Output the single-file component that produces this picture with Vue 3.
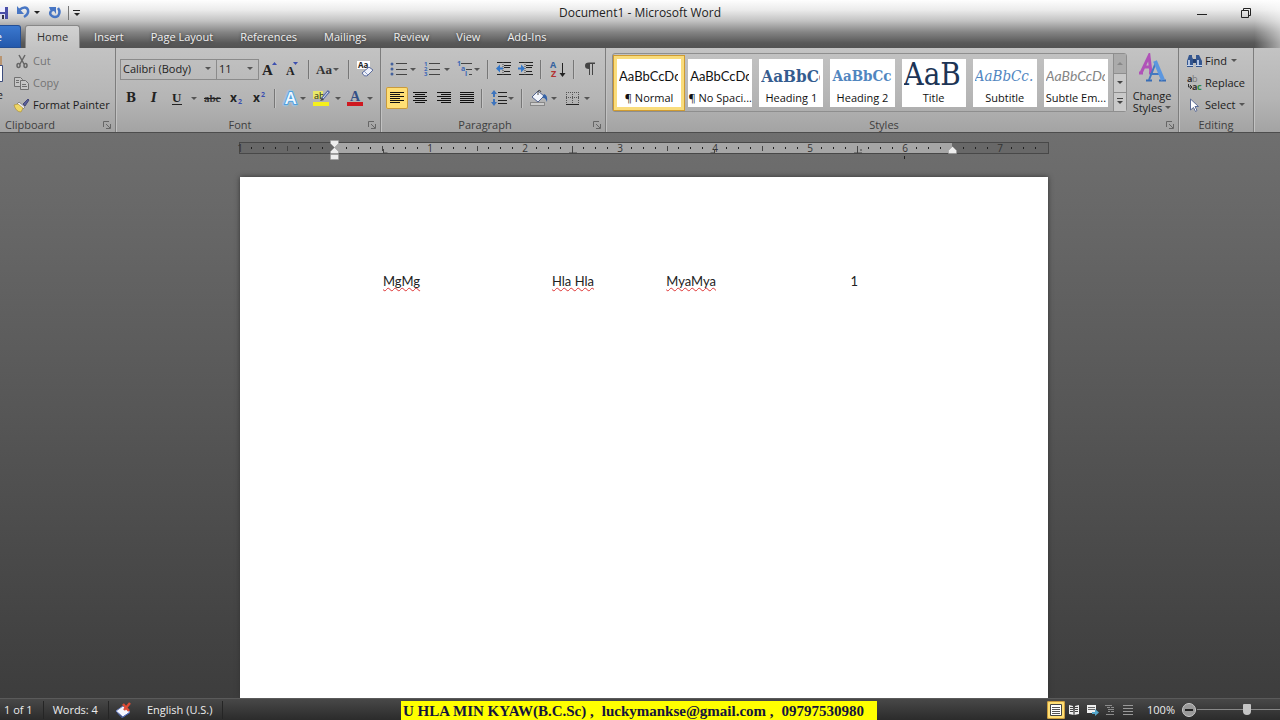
<script setup>
import { ref } from 'vue'

const tabs = ['Home', 'Insert', 'Page Layout', 'References', 'Mailings', 'Review', 'View', 'Add-Ins']
const family = ref('Calibri (Body)')
const size = ref('11')
const zoom = ref(61)

// Icon markup is drawn around a centred origin, 22px high.
const arrow = (x, y = 0) => `<path d="M${x - 3} ${y - 1}h6l-3 3z" fill="#555"/>`
const lines = (x, ys, w, c = '#222') => ys.map((y) => `<path d="M${x} ${y}.5h${w}" stroke="${c}"/>`).join('')
const serif = 'font-family="DejaVu Serif, serif"'
const sans = 'font-family="Open Sans, sans-serif"'
const sep = { w: 8, sep: true }

const fontTop = [
  { name: 'Grow Font', w: 22, svg: `<text x="-8" y="6" font-size="15" font-weight="700" font-family="Liberation Serif, serif" fill="#222">A</text><path d="M2 -4h5l-2.500 -3z" fill="#3c4fb0"/>` },
  { name: 'Shrink Font', w: 22, svg: `<text x="-6" y="6" font-size="12" font-weight="700" font-family="Liberation Serif, serif" fill="#222">A</text><path d="M1 -7h5l-2.500 3z" fill="#3c4fb0"/>` },
  { ...sep, w: 10 },
  { name: 'Change Case', w: 30, svg: `<text x="-12" y="5" font-size="13" font-weight="700" font-family="Liberation Serif, serif" fill="#333">Aa</text>${arrow(8)}` },
  { ...sep, w: 10 },
  { name: 'Clear Formatting', w: 24, svg: `<rect x="-8" y="-8" width="13" height="8" fill="#fff"/><text x="-7" y="-1" font-size="8" font-weight="700" ${sans} fill="#222">Aa</text><path d="M-3 4l7-6 4 3-6 6q-3 1-5-3z" fill="#eef1fa" stroke="#5d6d9c"/><path d="M-1 2l4 4" stroke="#8c9cc8"/>` }
]
const fontBottom = [
  { name: 'Bold', w: 22, svg: `<text x="-5" y="4" font-size="12" font-weight="700" ${serif} fill="#222">B</text>` },
  { name: 'Italic', w: 24, svg: `<text x="-3" y="4" font-size="12" font-style="italic" font-weight="700" ${serif} fill="#222">I</text>` },
  { name: 'Underline', w: 34, svg: `<text x="-11" y="4" font-size="13" font-weight="700" font-family="Liberation Serif, serif" fill="#222">U</text><path d="M-11 6.500h10" stroke="#222"/>${arrow(11)}` },
  { name: 'Strikethrough', w: 24, svg: `<text x="-8" y="4" font-size="11" font-weight="700" font-family="Liberation Serif, serif" fill="#333">abc</text><path d="M-8 .5h17" stroke="#222"/>` },
  { name: 'Subscript', w: 24, svg: `<text x="-6" y="4" font-size="12" font-weight="700" ${sans} fill="#222">x</text><text x="2" y="6" font-size="7" font-weight="700" ${sans} fill="#3c4fb0">2</text>` },
  { name: 'Superscript', w: 22, svg: `<text x="-6" y="4" font-size="12" font-weight="700" ${sans} fill="#222">x</text><text x="2" y="-1" font-size="7" font-weight="700" ${sans} fill="#3c4fb0">2</text>` },
  sep,
  { name: 'Text Effects', w: 30, svg: `<text x="-8" y="6" font-size="17" ${sans} fill="none" stroke="#8fcbf7" stroke-width="5" stroke-opacity=".5" stroke-linejoin="round">A</text><text x="-8" y="6" font-size="17" ${sans} fill="#eef8ff" stroke="#4d9fe0" stroke-width="2" paint-order="stroke" font-weight="600">A</text>${arrow(10)}` },
  { name: 'Text Highlight Color', w: 36, svg: `<rect x="-13" y="-7" width="10" height="8" fill="#e8e86a"/><text x="-12" y="1" font-size="9" ${sans} fill="#222">ab</text><path d="M3 -7l-7 8" stroke="#5b6fa8" stroke-width="3"/><path d="M2 -6l-5 6" stroke="#dfe6f7"/><path d="M-4 0l-2 3 4-1z" fill="#444"/><rect x="-13" y="4" width="16" height="4" fill="#f5f01c"/>${arrow(12)}` },
  { name: 'Font Color', w: 32, svg: `<text x="-10" y="3" font-size="14" font-weight="700" font-family="Liberation Serif, serif" fill="#344f86">A</text><rect x="-13" y="4" width="16" height="4" fill="#cf1820"/>${arrow(10)}` }
]
const dots = [-5, 0, 5].map((y) => `<circle cx="-11" cy="${y}" r="1.500" fill="#44619c"/>`).join('')
const nums = [-3, 2, 7].map((y, i) => `<text x="-13" y="${y}" font-size="6" font-weight="700" ${sans} fill="#3d69b8">${i + 1}</text>`).join('')
const indent = (d) => `${lines(-7, [-6, 5], 14)}${lines(0, [-3], 7)}${lines(0, [-1, 2], 6)}<path d="M-1 -7v14" stroke="#444" stroke-dasharray="1 1"/><path d="${d}" fill="#3477c9"/>`
const paraTop = [
  { name: 'Bullets', w: 34, svg: `${dots}${lines(-7, [-5, 0, 5], 11, '#444')}${arrow(10)}` },
  { name: 'Numbering', w: 34, svg: `${nums}${lines(-8, [-5, 0, 5], 11, '#444')}${arrow(10)}` },
  { name: 'Multilevel List', w: 30, svg: `<g font-size="7" font-weight="700" ${sans} fill="#3d69b8"><text x="-12" y="-3">1</text><text x="-8" y="2">a</text><text x="-4" y="7">i</text></g>${lines(-8, [-5], 11, '#444')}${lines(-3, [0], 6, '#444')}${lines(0, [5], 3, '#444')}${arrow(8)}` },
  sep,
  { name: 'Decrease Indent', w: 24, svg: indent('M-8 -.5l4-4v3h3v2h-3v3z') },
  { name: 'Increase Indent', w: 20, svg: indent('M-1 -.5l-4-4v3h-3v2h3v3z') },
  { ...sep, w: 10 },
  { name: 'Sort', w: 24, svg: `<text x="-8" y="-1" font-size="9" font-weight="700" ${sans} fill="#35639f">A</text><text x="-7" y="8" font-size="9" font-weight="700" ${sans} fill="#b23232">Z</text><path d="M4.500 -6v12" stroke="#222"/><path d="M1.500 4h6l-3 4z" fill="#222"/>` },
  sep,
  { name: 'Show Paragraph Marks', w: 24, svg: `<path d="M5-6.500h-6q-4 0-4 3.200t4 3.300v6h1v-11h2v11h1v-11h2z" fill="#444"/>` }
]
const align = (rows) => rows.map(([x, w], i) => `<path d="M${x} ${-5.500 + i * 2}h${w}" stroke="#111"/>`).join('')
const paraBottom = [
  { name: 'Align Left', w: 22, on: true, svg: align([[-7, 14], [-7, 10], [-7, 14], [-7, 10], [-7, 14], [-7, 10]]) },
  { name: 'Center', w: 24, svg: align([[-7, 14], [-5, 10], [-7, 14], [-5, 10], [-7, 14], [-5, 10]]) },
  { name: 'Align Right', w: 24, svg: align([[-7, 14], [-3, 10], [-7, 14], [-3, 10], [-7, 14], [-3, 10]]) },
  { name: 'Justify', w: 22, svg: align([[-7, 14], [-7, 14], [-7, 14], [-7, 14], [-7, 14], [-7, 14]]) },
  sep,
  { name: 'Line Spacing', w: 32, svg: `<path d="M-8 -8l3 4h-2v3h-2v-3h-2zM-8 8l3-4h-2v-3h-2v3h-2z" fill="#3d74bd"/>${lines(-4, [-5, -1, 2, 5], 9, '#222')}${arrow(9)}` },
  sep,
  { name: 'Shading', w: 36, svg: `<path d="M-12 -1l6-6 6 5-6 6z" fill="#f2f5fc" stroke="#51628f"/><path d="M-6 -3v-4q2-2 3 1" fill="none" stroke="#444"/><path d="M0 -4q4 1 3 8-2-5-5-4z" fill="#3563a8"/><rect x="-13.500" y="4.500" width="14" height="3" fill="#ccc" stroke="#888"/>${arrow(10)}` },
  { name: 'Borders', w: 32, svg: `<path d="M-11.500 -6v11M-5.500 -6v11M.5 -6v11M-12 -5.500h13M-12 -.5h13" stroke="#555" stroke-dasharray="1 1" fill="none"/><path d="M-12 6.500h13" stroke="#222"/>${arrow(9)}` }
]
const fontRows = [fontTop, fontBottom]
const paraRows = [paraTop, paraBottom]

const styles = [
  { name: '¶ Normal', text: 'AaBbCcDc', kind: 'body', on: true },
  { name: '¶ No Spaci...', text: 'AaBbCcDc', kind: 'body' },
  { name: 'Heading 1', text: 'AaBbCc', kind: 'h1' },
  { name: 'Heading 2', text: 'AaBbCc', kind: 'h2' },
  { name: 'Title', text: 'AaB', kind: 'title' },
  { name: 'Subtitle', text: 'AaBbCc.', kind: 'subtitle' },
  { name: 'Subtle Em...', text: 'AaBbCcDc', kind: 'subtle' }
]

// Ruler: 95 units per inch, ticks every eighth, zero at the left margin.
const zero = 95
const inch = 95
const ticks = []
for (let i = -8; i <= 59; i++) {
  const x = Math.round(zero + (i * inch) / 8)
  if (i % 8 === 0) {
    if (i !== 0) ticks.push({ x, label: String(Math.abs(i / 8)) })
  } else ticks.push({ x, half: i % 4 === 0 })
}
</script>

<template>
  <div class="app">
    <header class="top">
      <div class="titlebar">
        <div class="quick">
          <button aria-label="Save" class="save"><svg width="8" height="16" viewBox="7 0 8 16"><path d="M0 2h15v12H0z" fill="#4a4fa8" /><path d="M4 2h8v5H4z" fill="#eef" /><path d="M5 9h7v5H5z" fill="#dde" /><path d="M9 10h2v4H9z" fill="#334" /></svg></button>
          <button aria-label="Undo"><svg width="26" height="16" viewBox="0 0 26 16"><path d="M3 5q7-5 9 0 1 4-4 7" fill="none" stroke="#4876c4" stroke-width="2.500" /><path d="M1 1v8h7z" fill="#4876c4" /><path d="M18 6h6l-3 3z" fill="#222" /></svg></button>
          <button aria-label="Repeat"><svg width="20" height="16" viewBox="0 0 20 16"><path d="M5 6q-2 3 1 5 3 2 6 0 3-4 0-8" fill="none" stroke="#4876c4" stroke-width="2.500" /><path d="M3 2h7v7L8 6 5 7z" fill="#4876c4" /></svg></button>
          <span class="qsep"></span>
          <button aria-label="Customize Quick Access Toolbar"><svg width="12" height="16" viewBox="0 0 12 16"><path d="M2 5.500h7" stroke="#222" /><path d="M3 8h6l-3 3z" fill="#222" /></svg></button>
        </div>
        <h1>Document1 - Microsoft Word</h1>
        <div class="window">
          <button aria-label="Minimize"><svg width="12" height="12"><path d="M1 7.500h10" stroke="#222" /></svg></button>
          <button aria-label="Restore"><svg width="12" height="12" fill="none" stroke="#222"><path d="M1.500 3.500h7v7h-7zM3.500 3.500v-2h7v7h-2" /></svg></button>
        </div>
      </div>
      <nav class="tabs">
        <button class="file">File</button>
        <button v-for="(t, i) in tabs" :key="t" :class="['tab', { active: i === 0 }]">{{ t }}</button>
      </nav>
    </header>

    <section class="ribbon">
      <div class="group clipboard">
        <div class="content">
          <button class="paste">
            <svg width="4" height="36" viewBox="0 0 4 36"><path d="M0 8h2v10H0z" fill="#b99572" /><path d="M0 17h2v17H0z" fill="#fff" /><path d="M0 17.500h2.500v16H0" fill="none" stroke="#3c4c7c" /></svg>
            <span>Paste</span>
          </button>
          <div class="stack">
            <button class="dim"><svg width="18" height="18" viewBox="0 0 18 18" fill="none" stroke="#666" stroke-width="1.500"><path d="M6 3l5 9M12 3l-5 9" /><ellipse cx="5.500" cy="13.500" rx="1.500" ry="2" /><ellipse cx="12.500" cy="13.500" rx="1.500" ry="2" /></svg>Cut</button>
            <button class="dim"><svg width="18" height="18" viewBox="0 0 18 18" fill="#c6c6c6" stroke="#707070"><path d="M1.500 3.500h6l2 2v7h-8z" /><path d="M7.500 6.500h5l3 3v6h-8z" /><path d="M3 6.500h3M3 8.500h3M9 10.500h4M9 12.500h5" /></svg>Copy</button>
            <button><svg width="18" height="18" viewBox="0 0 18 18"><path d="M10 8l5-5 1 1-4 6z" fill="#5b5f9c" stroke="#444878" /><path d="M6 6l6 5-2 2-6-5z" fill="#eef" stroke="#888" /><path d="M1 9l4-1 5 4-2 4q-5 0-7-7z" fill="#f0d865" stroke="#a9892e" stroke-width=".6" /></svg>Format Painter</button>
          </div>
        </div>
        <footer><span>Clipboard</span><button class="launch" aria-label="Clipboard options"><svg width="8" height="8" fill="none" stroke="#666"><path d="M.5 6V.5H6M3 3l4 4M7.500 3v4.500H3" /></svg></button></footer>
      </div>

      <div class="group font">
        <div class="rows">
          <div v-for="(row, r) in fontRows" :key="r" class="row">
            <template v-if="r === 0">
              <label class="combo wide"><select v-model="family" aria-label="Font"><option>Calibri (Body)</option></select><svg width="8" height="4"><path d="M1 0h6l-3 3z" fill="#555" /></svg></label>
              <label class="combo"><select v-model="size" aria-label="Font size"><option>11</option></select><svg width="8" height="4"><path d="M1 0h6l-3 3z" fill="#555" /></svg></label>
            </template>
            <template v-for="(t, i) in row" :key="i">
              <svg v-if="t.sep" :width="t.w" height="22" :viewBox="`${-t.w / 2} -11 ${t.w} 22`"><path d="M.5 -9v19" stroke="#777" /><path d="M1.500 -9v19" stroke="#c4c4c4" /></svg>
              <button v-else :aria-label="t.name" :class="{ on: t.on }"><svg :width="t.w" height="22" :viewBox="`${-t.w / 2} -11 ${t.w} 22`" v-html="t.svg"></svg></button>
            </template>
          </div>
        </div>
        <footer><span>Font</span><button class="launch" aria-label="Font options"><svg width="8" height="8" fill="none" stroke="#666"><path d="M.5 6V.5H6M3 3l4 4M7.500 3v4.500H3" /></svg></button></footer>
      </div>

      <div class="group paragraph">
        <div class="rows">
          <div v-for="(row, r) in paraRows" :key="r" class="row">
            <template v-for="(t, i) in row" :key="i">
              <svg v-if="t.sep" :width="t.w" height="22" :viewBox="`${-t.w / 2} -11 ${t.w} 22`"><path d="M-.5 -9v19" stroke="#777" /><path d="M.5 -9v19" stroke="#c4c4c4" /></svg>
              <button v-else :aria-label="t.name" :class="{ on: t.on }"><svg :width="t.w" height="22" :viewBox="`${-t.w / 2} -11 ${t.w} 22`" v-html="t.svg"></svg></button>
            </template>
          </div>
        </div>
        <footer><span>Paragraph</span><button class="launch" aria-label="Paragraph options"><svg width="8" height="8" fill="none" stroke="#666"><path d="M.5 6V.5H6M3 3l4 4M7.500 3v4.500H3" /></svg></button></footer>
      </div>

      <div class="group styles">
        <div class="content">
          <div class="gallery">
            <div class="cards">
              <button v-for="s in styles" :key="s.name" :class="['card', { chosen: s.on }]">
                <span :class="['preview', s.kind]">{{ s.text }}</span>
                <span class="caption">{{ s.name }}</span>
              </button>
            </div>
            <div class="scroll">
              <button aria-label="Scroll up" class="off"><svg width="8" height="6"><path d="M1 4h6L4 1z" fill="#888" /></svg></button>
              <button aria-label="Scroll down"><svg width="8" height="6"><path d="M1 1h6L4 4z" fill="#444" /></svg></button>
              <button aria-label="More styles"><svg width="8" height="8"><path d="M1 .5h6" stroke="#444" /><path d="M1 3h6L4 6z" fill="#444" /></svg></button>
            </div>
          </div>
          <button class="change">
            <svg width="32" height="30" viewBox="0 0 32 30" fill="none"><path d="M3 20h4M13 20h4M5 20l8-17 2 17M8 14h7" stroke="#b052b8" stroke-width="3" /><path d="M10 27.500h6M23 27.500h7" stroke="#386db5" stroke-width="2" /><path d="M13 27l7-18M14 21h10" stroke="#4478c0" stroke-width="2" /><path d="M19 8l8 19" stroke="#5c97e0" stroke-width="4" /></svg>
            <span>Change</span>
            <span>Styles <svg width="6" height="6"><path d="M0 1h6L3 4z" fill="#555" /></svg></span>
          </button>
        </div>
        <footer><span>Styles</span><button class="launch" aria-label="Styles options"><svg width="8" height="8" fill="none" stroke="#666"><path d="M.5 6V.5H6M3 3l4 4M7.500 3v4.500H3" /></svg></button></footer>
      </div>

      <div class="group editing">
        <div class="stack">
          <button><svg width="18" height="18" viewBox="0 0 18 18"><path d="M4 3h3v2l1 2v8H2V9zM11 3h3l3 6v6h-6V7z" fill="#34568f" /><path d="M8 7h3v4H8z" fill="#26406f" /><path d="M4 8v5M13 8v5" stroke="#dce7fa" stroke-width="1.500" /><path d="M2 13.500h6M11 13.500h6" stroke="#c4d5f2" /></svg>Find <svg width="6" height="6"><path d="M0 1h6L3 4z" fill="#555" /></svg></button>
          <button><svg width="18" height="18" viewBox="0 0 18 18" font-family="Open Sans, sans-serif" font-size="9"><text x="2" y="8" font-weight="700" fill="#333">a</text><text x="7" y="8" fill="#777">b</text><path d="M3.500 10v3h3M5 11l2 2-2 2" fill="none" stroke="#333" /><text x="7" y="16" font-weight="700" fill="#333">a</text><text x="12" y="16" font-weight="700" fill="#2d8b3c">c</text></svg>Replace</button>
          <button><svg width="18" height="18" viewBox="0 0 18 18"><path d="M5.500 3v11l3-2.500 2 4 1.500-1-2-4h3.500z" fill="#fff" stroke="#5c6c96" /></svg>Select <svg width="6" height="6"><path d="M0 1h6L3 4z" fill="#555" /></svg></button>
        </div>
        <footer><span>Editing</span></footer>
      </div>
    </section>

    <main class="workspace">
      <svg class="ruler" viewBox="0 0 810 22" aria-label="Ruler">
        <rect x=".5" y="2.500" width="809" height="11" fill="#686868" stroke="#484848" />
        <rect x="95" y="3" width="618" height="10" fill="#a6a6a6" />
        <template v-for="t in ticks" :key="t.x">
          <text v-if="t.label" :x="t.x + 1" y="12" text-anchor="middle" class="num">{{ t.label }}</text>
          <path v-else-if="t.half" :d="`M${t.x + .5} 6v5`" stroke="#444" />
          <path v-else :d="`M${t.x + .5} 7v2`" stroke="#222" />
        </template>
        <path d="M144.500 9v4h4M333.500 9v4M330 13h8M475.500 9v4h-4M618.500 9v4M615 13h8M621 10h2" fill="none" stroke="#444" />
        <path d="M665.500 16v3" stroke="#222" />
        <path d="M91.500 .5h8v3l-4 4 4 4v2h-8v-2l4-4-4-4z" fill="#eee" stroke="#999" stroke-width=".5" />
        <path d="M91.500 14.500h8v5h-8zM713.500 6.500l4 4v3h-8v-3z" fill="#eee" stroke="#999" stroke-width=".5" />
      </svg>
      <article class="page">
        <p class="line">
          <span class="t1"><u>MgMg</u></span><span class="t2"><u>Hla Hla</u></span><span class="t3"><u>MyaMya</u></span><span class="t4">1</span>
        </p>
      </article>
    </main>

    <footer class="status">
      <div class="info">
        <span class="pages">1 of 1</span>
        <span class="words">Words: 4</span>
        <button class="proof" aria-label="Proofing errors"><svg width="18" height="16" viewBox="0 0 18 16"><path d="M1 9l7-5 7 6-7 5z" fill="#f4f6ff" stroke="#6c7fc0" /><path d="M1 10l6 5 8-5v1l-8 5z" fill="#4763b4" /><path d="M8 2l6 7M15 1l-6 7" stroke="#df4b35" stroke-width="2.500" /></svg></button>
        <span class="lang">English (U.S.)</span>
      </div>
      <div class="banner"><span>U HLA MIN KYAW(B.C.Sc) ,</span><span>luckymankse@gmail.com ,</span><span>09797530980</span></div>
      <div class="views">
        <button class="on" aria-label="Print Layout"><svg width="18" height="18" viewBox="0 0 18 18"><path d="M3.500 3.500h11v11h-11z" fill="#fff" stroke="#444" /><path d="M5 6.500h8M5 8.500h8M5 10.500h8M5 12.500h8" stroke="#555" /></svg></button>
        <button aria-label="Full Screen Reading"><svg width="18" height="18" viewBox="0 0 18 18"><path d="M4 4l4 1 1 9-5-1zM14 4l-4 1-1 9 5-1z" fill="#eee" /><path d="M5 6.500h3M5 8.500h3M5 10.500h3M10 6.500h3M10 8.500h3M10 10.500h3M9 5v9" stroke="#444" /></svg></button>
        <button aria-label="Web Layout"><svg width="18" height="18" viewBox="0 0 18 18"><path d="M4 4h9v8H4z" fill="#eee" /><path d="M5 6.500h7M5 8.500h7" stroke="#666" /><path d="M9 11h3V8l4 3.500-4 3.500v-2H9z" fill="#55a7cb" /></svg></button>
        <button aria-label="Outline"><svg width="18" height="18" viewBox="0 0 18 18"><path d="M4 4.500h7M6 6.500h3M10 6.500h3M7 8.500h6M7 10.500h2M10 10.500h3M5 13.500h8" stroke="#8c8c8c" /></svg></button>
        <button aria-label="Draft"><svg width="18" height="18" viewBox="0 0 18 18"><path d="M4 4.500h10M4 7.500h10M4 10.500h10M4 13.500h10" stroke="#999" /></svg></button>
        <span class="percent">100%</span>
        <button aria-label="Zoom out" class="minus"><svg width="16" height="16"><circle cx="8" cy="8" r="6.500" fill="#999" stroke="#ccc" /><path d="M4 8h8" stroke="#222" stroke-width="2" /></svg></button>
        <input v-model="zoom" type="range" min="0" max="100" aria-label="Zoom" />
      </div>
    </footer>
  </div>
</template>

<style>
html,
body {
  background: #3d3d3d;
}
</style>

<style scoped>
.app {
  display: flex;
  flex-direction: column;
  height: 100vh;
  overflow: hidden;
  font: 11px/14px "Open Sans", "Noto Sans", sans-serif;
  color: #1c1c1c;
}
button {
  display: inline-flex;
  align-items: center;
  justify-content: center;
  flex: none;
  margin: 0;
  padding: 0;
  border: 0;
  background: none;
  font: inherit;
  color: inherit;
}
svg {
  display: block;
  flex: none;
}
.top {
  background: linear-gradient(90deg, transparent 98%, rgba(255, 255, 255, 0.5) 100%),
    linear-gradient(#fefefe 0, #ebebeb 10px, #c2c2c2 21px, #858585 32px, #585858 43px, #525252 48px);
}
.titlebar {
  display: grid;
  grid-template-columns: 1fr auto 1fr;
  align-items: center;
  height: 26px;
}
.quick {
  display: flex;
  align-items: center;
  height: 24px;
}
.quick button:nth-child(2) {
  margin-left: 8px;
}
.quick button:nth-child(3) {
  margin-left: 4px;
}
.qsep {
  height: 14px;
  margin: 0 2px;
  border-left: 1px solid #777;
}
h1 {
  margin: 0;
  font: 12px/16px "Open Sans", sans-serif;
  color: #222;
}
.window {
  display: flex;
  justify-content: flex-end;
  gap: 32px;
  padding-right: 28px;
}
.tabs {
  display: flex;
  align-items: flex-end;
  height: 22px;
}
.file {
  justify-content: flex-end;
  width: 21px;
  height: 23px;
  margin-right: 4px;
  padding-right: 18px;
  box-sizing: border-box;
  border: 1px solid #244f95;
  border-left: 0;
  border-radius: 0 3px 0 0;
  background: linear-gradient(#3b78cf, #2459ac);
  color: #fff;
}
.tab {
  height: 23px;
  padding: 0 13px 0 14px;
  color: #f0f0f0;
  text-shadow: 0 0 3px #333;
}
.tab.active {
  padding: 0 11px;
  border: 1px solid #888;
  border-bottom: 0;
  border-radius: 3px 3px 0 0;
  background: linear-gradient(#d2d2d2, #c3c3c3);
  color: #333;
  text-shadow: none;
}
.ribbon {
  display: flex;
  height: 84px;
  padding-right: 26px;
  border-bottom: 1px solid #4d4d4d;
  background: linear-gradient(#c3c3c3, #b5b5b5 60%, #a3a3a3);
}
.group {
  display: flex;
  flex-direction: column;
  flex: none;
  box-sizing: border-box;
  border-right: 1px solid #7d7d7d;
  box-shadow: 1px 0 #c2c2c2;
}
.group footer {
  display: flex;
  align-items: center;
  justify-content: center;
  margin-top: auto;
  height: 14px;
  color: #3e3e3e;
}
.group footer span {
  flex: 1;
  text-align: center;
}
.launch {
  width: 16px;
}
.clipboard {
  width: 116px;
}
.clipboard footer span {
  padding-left: 5px;
  text-align: left;
}
.content {
  display: flex;
}
.paste {
  flex-direction: column;
  align-items: flex-end;
  justify-content: flex-start;
  width: 3px;
  height: 60px;
  margin-right: 10px;
  overflow: hidden;
}
.paste svg {
  align-self: flex-start;
}
.paste span {
  margin-top: 4px;
}
.stack {
  display: flex;
  flex-direction: column;
  align-items: flex-start;
  padding-top: 2px;
}
.stack button {
  gap: 2px;
  height: 22px;
}
.stack button svg:last-child:not(:first-child) {
  margin-left: 2px;
}
.dim {
  color: #747474;
}
.font {
  width: 265px;
}
.paragraph {
  width: 225px;
}
.rows {
  display: flex;
  flex-direction: column;
  gap: 7px;
  padding: 10px 0 0 4px;
}
.paragraph .rows {
  padding-left: 5px;
}
.row {
  display: flex;
  align-items: center;
}
.row button.on,
.views .on {
  border-radius: 2px;
  background: #ffdf75;
  box-shadow: inset 0 0 0 1px #c99a3c;
}
.combo {
  display: grid;
  grid-template-columns: 1fr 12px;
  align-items: center;
  width: 43px;
  height: 21px;
  box-sizing: border-box;
  border: 1px solid #8b8b8b;
}
.combo.wide {
  width: 96px;
  border-right: 0;
}
.combo select {
  grid-area: 1 / 1 / 2 / 3;
  width: 100%;
  padding: 0 2px;
  border: 0;
  appearance: none;
  background: none;
  font: inherit;
  color: #222;
}
.combo svg {
  grid-area: 1 / 2;
}
.styles {
  flex: 1;
  min-width: 0;
}
.styles .content {
  padding: 5px 3px 0 6px;
}
.gallery {
  display: flex;
  flex: 1;
  min-width: 0;
  height: 59px;
  box-sizing: border-box;
  border: 1px solid #8e8e8e;
  border-radius: 3px;
}
.cards {
  display: grid;
  grid-template-columns: repeat(7, 1fr);
  flex: 1;
  gap: 7px;
  min-width: 0;
  padding: 5px 5px 4px 4px;
}
.card {
  flex-direction: column;
  justify-content: flex-start;
  min-width: 0;
  background: #fff;
  color: #111;
}
.card.chosen {
  box-shadow: 0 0 0 3px #f9dc7c, 0 0 0 4px #cf9b31;
}
.preview {
  display: flex;
  align-items: center;
  align-self: stretch;
  height: 28px;
  margin: 3px 3px 1px 2px;
  overflow: hidden;
  white-space: nowrap;
}
.caption {
  white-space: nowrap;
}
.body {
  font: 13px/16px Lato, sans-serif;
}
.h1,
.h2 {
  font: 700 17px/20px "DejaVu Serif Condensed", "DejaVu Serif", serif;
  color: #355c8f;
}
.h2 {
  font-size: 15px;
  color: #5186bf;
}
.title {
  align-items: flex-end;
  font: 31px/32px "DejaVu Serif Condensed", "DejaVu Serif", serif;
  color: #1d3556;
}
.subtitle {
  font: italic 15px/16px "DejaVu Serif Condensed", "DejaVu Serif", serif;
  color: #5186bf;
}
.subtle {
  font: italic 14px/16px Lato, sans-serif;
  color: #858585;
}
.scroll {
  display: grid;
  grid-template-rows: repeat(3, 1fr);
  width: 13px;
}
.scroll button {
  border-left: 1px solid #8e8e8e;
  border-top: 1px solid #8e8e8e;
  background: #c9c9c9;
}
.scroll .off {
  border-top: 0;
  background: #ababab;
}
.change {
  flex-direction: column;
  justify-content: flex-start;
  width: 46px;
  margin-left: 2px;
  line-height: 13px;
}
.change span {
  display: flex;
  align-items: center;
  gap: 3px;
}
.change > span {
  margin-bottom: -1px;
}
.change > svg {
  margin-bottom: 6px;
}
.editing {
  width: 75px;
}
.editing .stack {
  padding-left: 6px;
}
.workspace {
  display: flex;
  flex: 1;
  flex-direction: column;
  align-items: center;
  min-height: 0;
  padding: 7px 0 0 8px;
  background: linear-gradient(#6f6f6f, #3d3d3d);
}
.ruler {
  width: 100%;
  max-width: 810px;
  overflow: visible;
}
.num {
  font: 10px "Open Sans", sans-serif;
  fill: #333;
}
.page {
  flex: 1;
  width: 100%;
  max-width: 808px;
  min-height: 0;
  margin-top: 15px;
  box-sizing: border-box;
  padding: 95px 0 0 95px;
  background: #fff;
  box-shadow: 0 0 5px #333;
}
.line {
  display: flex;
  margin: 0;
  font: 13px/18px Lato, sans-serif;
  color: #222;
}
.line u {
  text-decoration: underline wavy #d33 1px;
  text-underline-offset: 1px;
  text-decoration-skip-ink: none;
}
.t1 {
  width: 185px;
  padding-left: 48px;
}
.t2 {
  width: 106px;
  text-align: center;
}
.t3 {
  width: 90px;
  text-align: right;
}
.t4 {
  width: 142px;
  text-align: right;
}
.t1,
.t2,
.t3,
.t4 {
  box-sizing: border-box;
}
.status {
  display: flex;
  align-items: center;
  height: 21px;
  border-top: 1px solid #5a5a5a;
  background: linear-gradient(#484848, #2b2b2b);
  color: #ececec;
}
.info {
  display: flex;
  align-items: center;
  width: 401px;
}
.info span {
  padding: 2px 10px 2px 9px;
  border-right: 1px solid #252525;
}
.info .pages {
  padding-left: 4px;
}
.proof {
  padding: 0 5px 0 6px;
}
.banner {
  display: flex;
  align-self: flex-end;
  gap: 8px;
  width: 474px;
  height: 19px;
  padding-left: 2px;
  background: #ffff00;
  font: 700 15px/20px "Liberation Serif", serif;
  color: #14143c;
  white-space: nowrap;
}
.views {
  display: flex;
  align-items: center;
  margin-left: auto;
}
.percent {
  padding: 0 6px 0 10px;
}
.views input {
  width: 83px;
  height: 16px;
  margin: 0;
  appearance: none;
  background: linear-gradient(#888, #888) center / 100% 1px no-repeat;
}
.views input::-webkit-slider-thumb {
  appearance: none;
  width: 8px;
  height: 11px;
  border-radius: 1px 1px 4px 4px;
  background: #c4c4c4;
}
</style>
